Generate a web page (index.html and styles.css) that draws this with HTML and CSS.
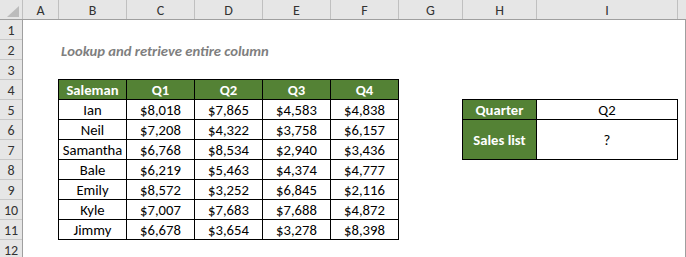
FILE: index.html
```html
<!DOCTYPE html>
<html>
<head>
<meta charset="utf-8">
<link rel="stylesheet" href="styles.css">
</head>
<body>
<div class="sheet">
  <div class="colhead">
    <div class="corner"><svg class="tri" width="12" height="11" viewBox="0 0 12 11"><polygon points="12,0 12,11 0,11" fill="#bcbcbc"/></svg></div>
    <div class="ch ca">A</div>
    <div class="ch cw">B</div>
    <div class="ch cw">C</div>
    <div class="ch cw">D</div>
    <div class="ch cw">E</div>
    <div class="ch cw">F</div>
    <div class="ch cg">G</div>
    <div class="ch chh">H</div>
    <div class="ch ci">I</div>
    <div class="ch cj"></div>
  </div>
  <div class="body">
    <div class="rowhead">
      <div class="rn">1</div><div class="rn">2</div><div class="rn">3</div><div class="rn">4</div>
      <div class="rn">5</div><div class="rn">6</div><div class="rn">7</div><div class="rn">8</div>
      <div class="rn">9</div><div class="rn">10</div><div class="rn">11</div><div class="rn">12</div>
    </div>
    <div class="cells">
      <div class="title">Lookup and retrieve entire column</div>
      <div class="data">
        <div class="c hd first">Saleman</div><div class="c hd">Q1</div><div class="c hd">Q2</div><div class="c hd">Q3</div><div class="c hd">Q4</div>
        <div class="c first">Ian</div><div class="c">$8,018</div><div class="c">$7,865</div><div class="c">$4,583</div><div class="c">$4,838</div>
        <div class="c first">Neil</div><div class="c">$7,208</div><div class="c">$4,322</div><div class="c">$3,758</div><div class="c">$6,157</div>
        <div class="c first">Samantha</div><div class="c">$6,768</div><div class="c">$8,534</div><div class="c">$2,940</div><div class="c">$3,436</div>
        <div class="c first">Bale</div><div class="c">$6,219</div><div class="c">$5,463</div><div class="c">$4,374</div><div class="c">$4,777</div>
        <div class="c first">Emily</div><div class="c">$8,572</div><div class="c">$3,252</div><div class="c">$6,845</div><div class="c">$2,116</div>
        <div class="c first">Kyle</div><div class="c">$7,007</div><div class="c">$7,683</div><div class="c">$7,688</div><div class="c">$4,872</div>
        <div class="c first">Jimmy</div><div class="c">$6,678</div><div class="c">$3,654</div><div class="c">$3,278</div><div class="c">$8,398</div>
      </div>
      <div class="lookup">
        <div class="c lab top first">Quarter</div><div class="c top">Q2</div>
        <div class="c lab first">Sales list</div><div class="c">?</div>
      </div>
    </div>
  </div>
</div>
</body>
</html>
```

FILE: styles.css
```css
* { box-sizing: border-box; }
html, body { margin: 0; padding: 0; background: #fff; }
body {
  width: 686px;
  height: 257px;
  overflow: hidden;
  font-family: "Carlito", "Lato", "Open Sans", sans-serif;
  font-size: 14.67px;
  color: #000;
}
.sheet { width: 686px; height: 257px; overflow: hidden; }

.colhead {
  display: flex;
  height: 20px;
  background: #e6e6e6;
  border-bottom: 1px solid #9f9f9f;
}
.corner {
  width: 23px;
  border-right: 1px solid #bfbfbf;
  display: flex;
  align-items: flex-end;
  justify-content: flex-end;
  padding: 0 3px 2px 0;
}
.tri { display: block; }
.ch {
  display: flex;
  align-items: center;
  justify-content: center;
  border-right: 1px solid #c0c0c0;
  color: #333;
  font-size: 14px;
  padding-top: 1px;
}
.ca { width: 36px; }
.cw { width: 68px; }
.cg { width: 64px; }
.chh { width: 74px; }
.ci { width: 141px; }
.cj { width: 8px; border-right: none; }

.body { display: flex; height: 237px; }
.rowhead {
  width: 23px;
  flex: none;
  background: #e6e6e6;
  border-right: 1px solid #9f9f9f;
}
.rn {
  height: 20px;
  border-bottom: 1px solid #c8c8c8;
  display: flex;
  align-items: center;
  justify-content: center;
  color: #333;
  font-size: 14px;
  padding-top: 1px;
}

.cells {
  flex: none;
  width: 663px;
  border-right: 1px solid #9f9f9f;
  display: grid;
  grid-template-columns: 35px 69px 68px 68px 68px 68px 63px 75px 141px 7px;
  grid-template-rows: 20px 20px 19px 21px repeat(8, 20px);
  align-content: start;
}

.title {
  grid-column: 2 / 8;
  grid-row: 2;
  align-self: center;
  padding-left: 3px;
  padding-top: 1px;
  font-weight: bold;
  font-style: italic;
  color: #7f7f7f;
  white-space: nowrap;
}

.data {
  grid-column: 2 / 7;
  grid-row: 4 / 12;
  display: grid;
  grid-template-columns: 69px repeat(4, 68px);
  grid-template-rows: 21px repeat(7, 20px);
}
.c {
  display: flex;
  align-items: center;
  justify-content: center;
  border-right: 1px solid #000;
  border-bottom: 1px solid #000;
  white-space: nowrap;
  padding-top: 1px;
}
.first { border-left: 1px solid #000; }
.hd {
  border-top: 1px solid #000;
  background: #548235;
  color: #fff;
  font-weight: bold;
}

.lookup {
  grid-column: 8 / 10;
  grid-row: 5 / 8;
  margin-top: -1px;
  display: grid;
  grid-template-columns: 75px 141px;
  grid-template-rows: 21px 40px;
}
.top { border-top: 1px solid #000; }
.lab {
  background: #548235;
  color: #fff;
  font-weight: bold;
}
```
